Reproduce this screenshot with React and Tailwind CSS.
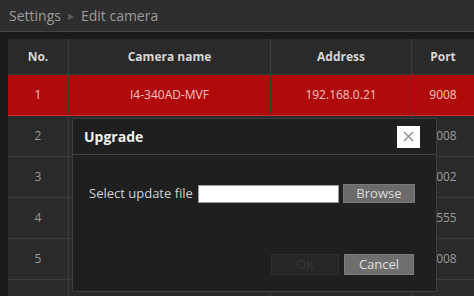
const COLS = 'grid grid-cols-[61px_202px_141px_62px]'

const ROWS = [
  { no: '1', name: 'I4-340AD-MVF', addr: '192.168.0.21', port: '9008' },
  { no: '2', name: '', addr: '', port: '9008' },
  { no: '3', name: '', addr: '', port: '8002' },
  { no: '4', name: '', addr: '', port: '5555' },
  { no: '5', name: '', addr: '', port: '9008' },
  { no: '', name: '', addr: '', port: '' },
]

function Cell({ children, last }) {
  return (
    <div className={`flex items-center justify-center ${last ? '' : 'border-r border-[#3c3c3c]'}`}>
      {children}
    </div>
  )
}

export default function App() {
  return (
    <div
      className="relative w-[474px] h-[296px] overflow-hidden bg-[#1b1b1b] flex flex-col"
      style={{ fontFamily: '"Open Sans", "Noto Sans", sans-serif' }}
    >
      <div className="h-[32px] shrink-0 bg-[#2e2e2e] border-b border-[#464646] flex items-center px-[9px] text-[14px] text-[#9c9c9c]">
        <span>Settings</span>
        <span className="mx-[7px] text-[8px] text-[#5a5a5a]">▶</span>
        <span>Edit camera</span>
      </div>

      <div className="flex-1 flex pt-[7px] pl-[8px]">
        <div className="flex-1 bg-[#2a2a2a] flex flex-col text-[12px]">
          <div className={`${COLS} h-[36px] border-b border-[#3c3c3c] font-bold text-[#d6d6d6]`}>
            <Cell>No.</Cell>
            <Cell>Camera name</Cell>
            <Cell>Address</Cell>
            <Cell last>Port</Cell>
          </div>
          {ROWS.map((r, i) => (
            <div
              key={i}
              className={`${COLS} h-[41px] shrink-0 border-b ${
                i === 0 ? 'bg-[#b10a0a] border-[#c43030] text-[#f2c4c4]' : 'border-[#3c3c3c] text-[#9a9a9a]'
              }`}
            >
              <Cell>{r.no}</Cell>
              <Cell>{r.name}</Cell>
              <Cell>{r.addr}</Cell>
              <Cell last>{r.port}</Cell>
            </div>
          ))}
        </div>
      </div>

      <div className="absolute left-[72px] top-[118px] w-[365px] h-[174px] bg-[#1f1f1f] border border-[#3e3e3e] flex flex-col">
        <div className="h-[36px] shrink-0 border-b border-[#444] flex items-center justify-between pl-[11px] pr-[16px]">
          <span className="text-[14px] font-bold text-[#f0f0f0]">Upgrade</span>
          <button className="w-[23px] h-[22px] bg-white flex items-center justify-center">
            <svg width="11" height="11" viewBox="0 0 11 11">
              <path d="M1 1L10 10M10 1L1 10" stroke="#8a8a8a" strokeWidth="1.4" />
            </svg>
          </button>
        </div>
        <div className="flex items-center mt-[29px] pl-[16px] text-[13px] text-[#d2d2d2]">
          <span>Select update file</span>
          <div className="ml-[5px] w-[141px] h-[18px] bg-white border border-[#9a9a9a]" />
          <button className="ml-[4px] w-[72px] h-[19px] bg-[#6b6b6b] border border-[#7a7a7a] text-[#dcdcdc] text-[13px] leading-none">
            Browse
          </button>
        </div>
        <div className="flex justify-end gap-[5px] mt-[50px] pr-[22px] text-[13px]">
          <button className="w-[68px] h-[21px] bg-[#262626] border border-[#2e2e2e] text-[#3a3a3a] leading-none">OK</button>
          <button className="w-[70px] h-[21px] bg-[#6e6e6e] border border-[#7c7c7c] text-[#e0e0e0] leading-none">Cancel</button>
        </div>
      </div>
    </div>
  )
}
